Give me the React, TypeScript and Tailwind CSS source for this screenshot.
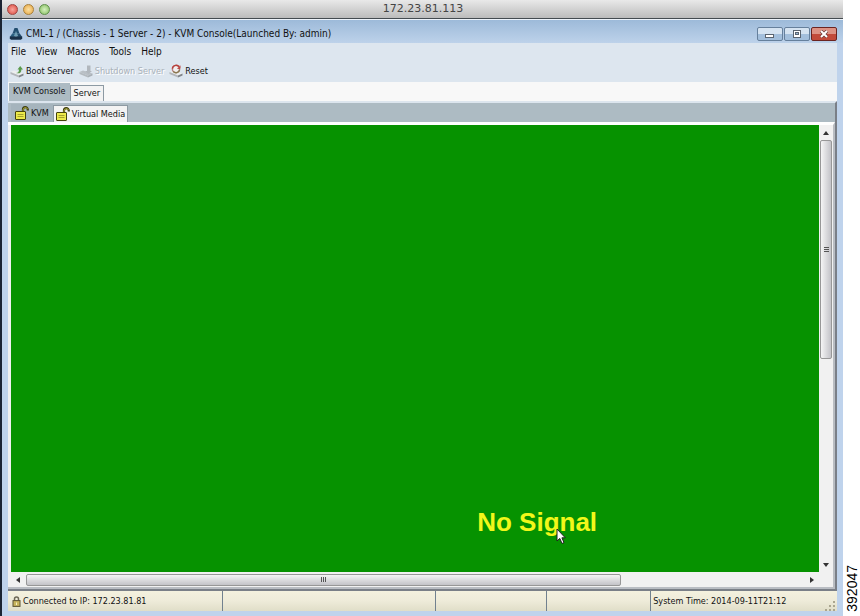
import type { ReactNode } from 'react';

const MENUS = ['File', 'View', 'Macros', 'Tools', 'Help'];

function Logo() {
    return (
        <svg viewBox="0 0 14 14" className="w-3.5 h-3.5 shrink-0">
            <path d="M5.5 1 H8.5 L10.5 6.5 H3.5 Z" fill="#234f70" />
            <path d="M3.2 6.5 H7 L6 10 H0.8 Z" fill="#2c5f80" />
            <path d="M10.8 6.5 H7 L8 10 H13.2 Z" fill="#234b6a" />
            <path d="M7 4 L9.3 9.5 H4.7 Z" fill="#6f9fb5" />
            <path d="M0.8 9.5 H13.2 V11.5 L12 12.7 H2 L0.8 11.5 Z" fill="#1a3048" />
        </svg>
    );
}

// Small server tray, shared by the three toolbar icons
function ServerIcon({ kind }: { kind: 'boot' | 'shutdown' | 'reset' }) {
    return (
        <svg viewBox="0 0 14 14" className="w-3.5 h-3.5 shrink-0">
            <path d="M0.5 8 L4 6.5 L13.5 9.5 L9 11.5 Z" fill={kind === 'shutdown' ? '#b9bfc5' : '#eceeef'} />
            <path d="M0.5 8 L9 11.5 V13.5 L0.5 10 Z" fill={kind === 'shutdown' ? '#b4babf' : '#b3b6ba'} />
            <path d="M9 11.5 L13.5 9.5 V11.5 L9 13.5 Z" fill={kind === 'shutdown' ? '#a9b0b6' : '#7f8388'} />
            {kind === 'boot' && (
                <path d="M6 9 C8 9 9 8 9 5.5 H7.5 L10.2 2 L13 5.5 H11.4 C11.4 9 9 10 6 9 Z" fill="#5a9a4c" />
            )}
            {kind === 'shutdown' && <path d="M8 1.5 H11.5 V7 H13 L9.5 10 L6 7 H8 Z" fill="#b1b7bd" />}
            {kind === 'reset' && (
                <g fill="none" strokeWidth="1.4">
                    <circle cx="7" cy="5" r="3.6" fill="#f1efef" stroke="#b98080" />
                    <path d="M3.4 4.6 A3.6 3.6 0 0 1 10.4 3.8" stroke="#b8403c" />
                    <path d="M10.6 5.6 A3.6 3.6 0 0 1 4.2 7.4" stroke="#8a7a52" />
                    <path d="M11 1.6 V4.4 H8.4" stroke="#b8403c" strokeWidth="1" />
                </g>
            )}
        </svg>
    );
}

function UnlockIcon() {
    return (
        <svg viewBox="0 0 14 14" className="w-3.5 h-3.5 shrink-0">
            <path d="M8 6.5 V4 A2.4 2.6 0 0 1 12.8 3.6 V4.5" fill="none" stroke="#3f3f14" strokeWidth="2.2" />
            <path d="M8 6.5 V4 A2.4 2.6 0 0 1 12.6 3.2" fill="none" stroke="#d8d440" strokeWidth="0.7" />
            <rect x="0.5" y="5.5" width="10" height="8" rx="0.5" fill="#ece94a" stroke="#45430c" />
            <path d="M2.5 8.5 H8.5 M2.5 10.5 H8.5" stroke="#a5a12c" />
        </svg>
    );
}

function LockIcon() {
    return (
        <svg viewBox="0 0 9 11" className="w-[9px] h-[11px] shrink-0">
            <path d="M2.5 5 V3 A2 2 0 0 1 6.5 3 V5" fill="none" stroke="#6d6857" strokeWidth="1.5" />
            <rect x="1" y="4.6" width="7" height="5.8" fill="#c7b45c" stroke="#5c5334" />
            <path d="M4.5 6.5 V9" stroke="#f6efc4" />
        </svg>
    );
}

function ToolButton({ kind, disabled, children }: { kind: 'boot' | 'shutdown' | 'reset'; disabled?: boolean; children: ReactNode }) {
    return (
        <button
            type="button"
            disabled={disabled}
            className="flex items-center gap-0.5 whitespace-nowrap disabled:text-[#a9b1b9] disabled:[text-shadow:1px_1px_0_#fff]"
        >
            <ServerIcon kind={kind} />
            {children}
        </button>
    );
}

function ScrollButton({ label, points }: { label: string; points: string }) {
    return (
        <button type="button" aria-label={label} className="flex items-center justify-center w-3.5 h-[15px] shrink-0">
            <svg viewBox="0 0 6 6" className="w-1.5 h-1.5">
                <polygon points={points} fill="#333" />
            </svg>
        </button>
    );
}

function WindowButtons() {
    const base = 'flex items-center justify-center w-[26px] h-3.5 rounded-[2px] border';
    const blue = 'border-[#66809c] bg-linear-to-b from-[#d5e3f1] from-50% to-[#a3bfdc] to-50%';
    return (
        <div className="flex gap-px pt-1">
            <button type="button" aria-label="Minimize" className={`${base} ${blue}`}>
                <svg viewBox="0 0 10 8" className="w-2.5 h-2">
                    <rect x="0.5" y="4.5" width="8" height="3" fill="#fff" stroke="#5a6470" />
                </svg>
            </button>
            <button type="button" aria-label="Maximize" className={`${base} ${blue}`}>
                <svg viewBox="0 0 10 8" className="w-2.5 h-2">
                    <rect x="1.5" y="0.5" width="7" height="7" fill="#fff" stroke="#5a6470" />
                    <rect x="3.5" y="2.5" width="3" height="2" fill="#9ab5d2" stroke="#5a6470" />
                </svg>
            </button>
            <button
                type="button"
                aria-label="Close"
                className={`${base} border-[#6b2420] bg-linear-to-b from-[#dd9284] from-50% to-[#c24a3a] to-50%`}
            >
                <svg viewBox="0 0 10 8" className="w-2.5 h-2">
                    <path d="M2 1 L8 7 M8 1 L2 7" stroke="#6b3a3a" strokeWidth="3.4" />
                    <path d="M2 1 L8 7 M8 1 L2 7" stroke="#fff" strokeWidth="2" />
                </svg>
            </button>
        </div>
    );
}

function MacTitleBar() {
    const light = 'w-[11px] h-[11px] rounded-full border';
    return (
        <header className="flex items-center h-[19px] px-1 bg-linear-to-b from-[#e9e9e9] to-[#bcbcbc] border-b border-[#444b50]">
            <div className="flex flex-1 gap-[5px] pl-px">
                <button type="button" aria-label="Close session" className={`${light} border-[#a04642] bg-radial from-[#f7a49c] to-[#d9423b]`} />
                <button type="button" aria-label="Minimize session" className={`${light} border-[#a9813c] bg-radial from-[#fbe0a0] to-[#e6a53b]`} />
                <button type="button" aria-label="Zoom session" className={`${light} border-[#5f8f4c] bg-radial from-[#d5f0bf] to-[#84bd5c]`} />
            </div>
            <h1 className="text-[11px] leading-4 font-['DejaVu_Sans',sans-serif] text-[#444]">172.23.81.113</h1>
            <div className="flex-1" />
        </header>
    );
}

function VerticalScroll() {
    return (
        <div className="flex flex-col w-3.5 bg-[#f1f1f1]">
            <ScrollButton label="Scroll up" points="0,5 3,1 6,5" />
            <div className="flex-1">
                <div className="flex flex-col items-center justify-center gap-px mx-px h-[52.5%] rounded-[2px] border border-[#979797] bg-linear-to-r from-[#f5f5f5] to-[#c3c3c8]">
                    <span className="w-[5px] h-px bg-[#555]" />
                    <span className="w-[5px] h-px bg-[#555]" />
                    <span className="w-[5px] h-px bg-[#555]" />
                </div>
            </div>
            <ScrollButton label="Scroll down" points="0,1 6,1 3,5" />
        </div>
    );
}

function HorizontalScroll() {
    return (
        <div className="flex items-center h-[15px] pr-3.5 bg-[#f1f1f1]">
            <ScrollButton label="Scroll left" points="5,0 1,3 5,6" />
            <div className="flex-1">
                <div className="flex items-center justify-center gap-px ml-px h-3 w-[76.3%] rounded-[2px] border border-[#979797] bg-linear-to-b from-[#f5f5f5] to-[#c3c3c8]">
                    <span className="w-px h-[5px] bg-[#555]" />
                    <span className="w-px h-[5px] bg-[#555]" />
                    <span className="w-px h-[5px] bg-[#555]" />
                </div>
            </div>
            <ScrollButton label="Scroll right" points="1,0 5,3 1,6" />
        </div>
    );
}

function StatusBar() {
    const cell = 'flex items-center border-l border-[#71818f] px-0.5 whitespace-nowrap';
    return (
        <footer className="grid grid-cols-[214fr_214fr_111fr_104fr_187fr] h-5 bg-linear-to-b from-[#f4f1de] via-[#eeebd9] to-[#e0dec8]">
            <div className="flex items-center gap-0.5 pl-1 whitespace-nowrap">
                <LockIcon />
                Connected to IP: 172.23.81.81
            </div>
            <div className={cell} />
            <div className={cell} />
            <div className={cell} />
            <div className={`${cell} justify-between`}>
                System Time: 2014-09-11T21:12
                <svg viewBox="0 0 10 10" className="w-2.5 h-2.5 self-end" fill="#aaa68f">
                    <path d="M8 0h2v2h-2z M4 4h2v2h-2z M8 4h2v2h-2z M0 8h2v2h-2z M4 8h2v2h-2z M8 8h2v2h-2z" />
                </svg>
            </div>
        </footer>
    );
}

export default function App() {
    return (
        <div className="flex min-h-screen bg-white font-['DejaVu_Sans_Condensed','DejaVu_Sans',sans-serif] text-[9px] leading-3 text-[#111]">
            <div className="flex flex-col flex-1 min-w-0 border-l-2 border-[#1b2433]">
                <MacTitleBar />

                <div className="flex flex-col flex-1 px-1.5 pb-[5px] border-t border-[#edf3fa] bg-[#bfd3ec]">
                    <div className="flex items-center justify-between h-[23px] -mx-1.5 pl-[7px] pr-1.5 bg-linear-to-b from-[#9dbad9] to-[#bdd2ea]">
                        <div className="flex items-center gap-[3px] pt-1 whitespace-nowrap">
                            <Logo />
                            <h2 className="text-[10px]">CML-1 / (Chassis - 1 Server - 2) - KVM Console(Launched By: admin)</h2>
                        </div>
                        <WindowButtons />
                    </div>

                    <nav className="flex items-center gap-2.5 h-[18px] pl-[3px] bg-[#dde6ef] text-[10px]">
                        {MENUS.map((menu) => (
                            <button key={menu} type="button">
                                {menu}
                            </button>
                        ))}
                    </nav>

                    <div className="flex items-center gap-[5px] h-[21px] pl-0.5 pb-0.5 bg-[#dde6ef]">
                        <ToolButton kind="boot">Boot Server</ToolButton>
                        <ToolButton kind="shutdown" disabled>
                            Shutdown Server
                        </ToolButton>
                        <ToolButton kind="reset">Reset</ToolButton>
                    </div>

                    {/* Console / server tabs */}
                    <div role="tablist" className="flex items-end h-[19px] pl-px bg-[#f8f8f8]">
                        <button type="button" role="tab" aria-selected="true" className="h-[18px] px-1 pb-0.5 bg-[#adbbc3] whitespace-nowrap">
                            KVM Console
                        </button>
                        <button type="button" role="tab" aria-selected="false" className="h-4 px-[3px] pb-0.5 border border-b-0 border-[#8d9aa3] bg-[#f3f3f3]">
                            Server
                        </button>
                    </div>

                    <main className="flex flex-col flex-1 border-r-2 border-b-2 border-[#7a7f87] border-t-2 border-t-[#dce5ee]">
                        <div role="tablist" className="flex items-end h-[19px] pl-[3px] bg-[#adbbc3]">
                            <button type="button" role="tab" aria-selected="true" className="flex items-center gap-0.5 h-[18px] px-1 bg-[#a5b4bd]">
                                <UnlockIcon />
                                KVM
                            </button>
                            <button
                                type="button"
                                role="tab"
                                aria-selected="false"
                                className="flex items-center gap-0.5 h-[17px] px-0.5 border border-b-0 border-[#8d9aa3] bg-[#f3f3f3] whitespace-nowrap"
                            >
                                <UnlockIcon />
                                Virtual Media
                            </button>
                        </div>

                        <div className="flex flex-col flex-1 pl-[3px] border-t-3 border-r-2 border-b-2 border-t-white border-r-[#b9bdc3] border-b-[#b9bdc3] bg-[#f1f1f1]">
                            <div className="flex flex-1">
                                {/* Remote screen, with the pointer drawn over it */}
                                <section className="relative flex-1 bg-[#069200] overflow-hidden">
                                    <p className="absolute left-[57.7%] bottom-[34px] text-[26px] leading-8 font-bold font-['Liberation_Sans',sans-serif] text-[#f2f71a] whitespace-nowrap">
                                        No Signal
                                    </p>
                                    <svg viewBox="0 0 10 17" className="absolute left-[67.4%] bottom-[27px] w-2.5 h-[17px]">
                                        <path
                                            d="M1 1 V13 L3.8 10.4 L6 15.5 L8 14.6 L5.9 9.8 H9.3 Z"
                                            fill="#fff"
                                            stroke="#222"
                                            strokeWidth="1"
                                        />
                                    </svg>
                                </section>
                                <VerticalScroll />
                            </div>
                            <HorizontalScroll />
                        </div>
                    </main>

                    <StatusBar />
                </div>
            </div>

            <aside className="flex items-end justify-center w-[17px] pb-1">
                <span className="[writing-mode:vertical-rl] rotate-180 text-sm leading-4 font-['Liberation_Sans',sans-serif] text-black">
                    392047
                </span>
            </aside>
        </div>
    );
}
